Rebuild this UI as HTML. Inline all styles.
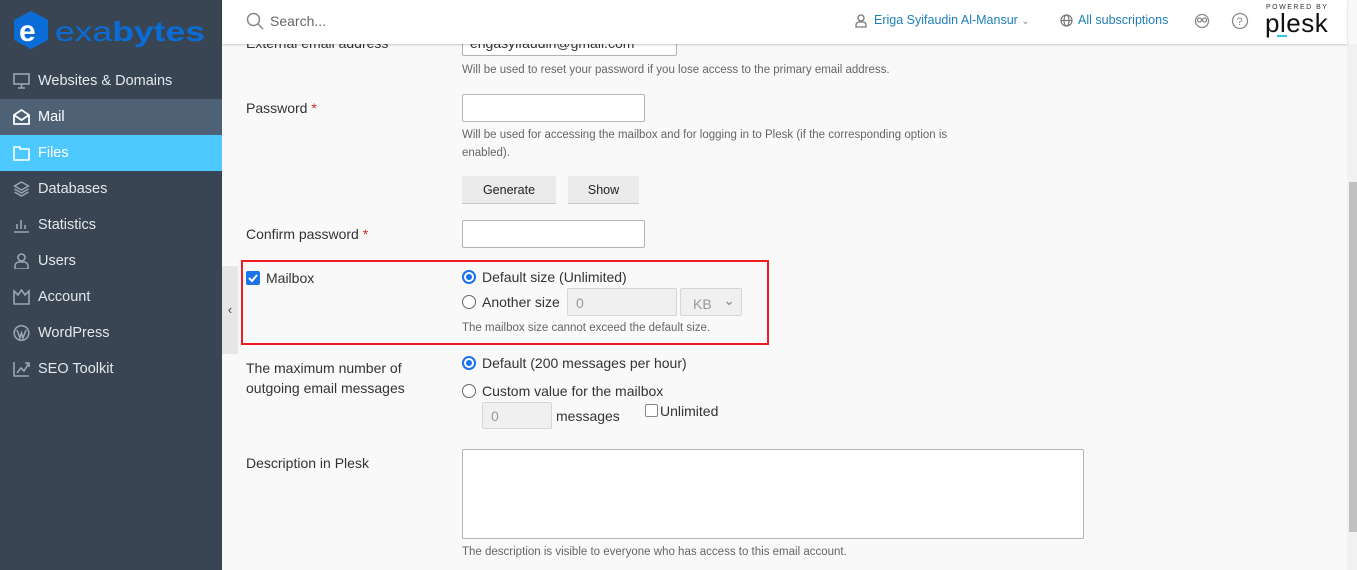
<!DOCTYPE html>
<html><head><meta charset="utf-8"><style>
*{box-sizing:border-box;margin:0;padding:0}
body{width:1357px;height:570px;overflow:hidden;font-family:"Liberation Sans",sans-serif;background:#f9f9f9;position:relative;color:#222}
.sb{position:absolute;left:0;top:0;width:222px;height:570px;background:#394552}
.logo{position:absolute;left:13px;top:10px}
.nav{position:absolute;top:63px;left:0;width:222px}
.nav div{height:36px;line-height:36px;color:#e4e8ec;font-size:14.5px;padding-left:38px;position:relative}
.nav div svg{position:absolute;left:13px;top:10px}
.nav .mail{background:#4f6174;color:#fff}
.nav .files{background:#4dc9ff;color:#fff}
.hd{position:absolute;left:222px;top:0;width:1125px;height:44px;background:#fff;box-shadow:0 1px 2px rgba(0,0,0,.2);z-index:5}
.main{position:absolute;left:0;top:44px;width:1347px;height:526px;overflow:hidden}
.main>*{margin-top:-44px}
.lbl{position:absolute;left:246px;font-size:14px;color:#333}
.req{color:#d02c2c}
.hint{position:absolute;left:462px;font-size:11.5px;color:#666;line-height:18px}
.inp{position:absolute;left:462px;width:183px;height:28px;border:1px solid #b3b3b3;background:#fff;border-radius:2px}
.btn{position:absolute;top:176px;height:28px;background:#ebebeb;border-bottom:1px solid #c8c8c8;font-size:12.5px;text-align:center;line-height:28px;color:#222}
.t{position:absolute;font-size:14px;color:#333}
.radio{position:absolute;width:14px;height:14px;border-radius:50%;border:1px solid #666;background:#fff}
.radio.on{border:2px solid #1a73e8}
.radio.on::after{content:"";position:absolute;left:2px;top:2px;width:6px;height:6px;border-radius:50%;background:#1a73e8}
.dis{position:absolute;background:#f0f0f0;border:1px solid #d6d6d6;color:#999;font-size:14px;border-radius:2px}
</style></head><body>
<div class="sb">
 <svg class="logo" width="195" height="40" viewBox="0 0 195 40"><polygon points="18,1 35,10 35,30 18,39 1,30 1,10" fill="#0a6dd7"/><text x="6" y="31" font-family="Liberation Sans" font-size="30" font-weight="bold" fill="#fff">e</text><text x="42" y="31" font-family="Liberation Sans" font-size="28" fill="#0a6dd7" textLength="150" lengthAdjust="spacingAndGlyphs">exa<tspan font-weight="bold">bytes</tspan></text></svg>
 <div class="nav">
  <div><svg width="17" height="16" fill="none" stroke="#9aa5b1" stroke-width="1.6"><rect x="1" y="1" width="15" height="10"/><path d="M5 15h7M8.5 11v4"/></svg>Websites &amp; Domains</div>
  <div class="mail"><svg width="17" height="16" fill="none" stroke="#fff" stroke-width="1.8"><path d="M1 6l7.5-5 7.5 5v9H1z M1 6l7.5 5 7.5-5"/></svg>Mail</div>
  <div class="files"><svg width="17" height="16" fill="none" stroke="#fff" stroke-width="1.6"><path d="M1 2h6v2h9v11H1z"/></svg>Files</div>
  <div><svg width="17" height="16" fill="none" stroke="#9aa5b1" stroke-width="1.5"><path d="M8.5 1l7 4-7 4-7-4z M1.5 8l7 4 7-4 M1.5 11l7 4 7-4"/></svg>Databases</div>
  <div><svg width="17" height="16" fill="none" stroke="#9aa5b1" stroke-width="1.6"><path d="M1 15h15M4 12V7M8 12V3M12 12V8"/></svg>Statistics</div>
  <div><svg width="17" height="16" fill="none" stroke="#9aa5b1" stroke-width="1.6"><circle cx="8.5" cy="4.5" r="3.5"/><path d="M2 16v-3a4 4 0 014-4h5a4 4 0 014 4v3z"/></svg>Users</div>
  <div><svg width="17" height="16" fill="none" stroke="#9aa5b1" stroke-width="1.6"><path d="M1 2l4 4 3.5-5 3.5 5 4-4v13H1z"/></svg>Account</div>
  <div><svg width="17" height="16" fill="none" stroke="#9aa5b1" stroke-width="1.6"><circle cx="8.5" cy="8" r="7.3"/><path d="M4 5l3 8 1.5-5 1.5 5 3-8"/></svg>WordPress</div>
  <div><svg width="17" height="16" fill="none" stroke="#9aa5b1" stroke-width="1.6"><path d="M1 1v14h15M4 12l4-5 3 3 5-8M12 2h4v4"/></svg>SEO Toolkit</div>
 </div>
</div>
<div class="hd">
 <svg style="position:absolute;left:24px;top:12px" width="18" height="18" fill="none" stroke="#888" stroke-width="1.5"><circle cx="7.5" cy="7.5" r="6"/><path d="M12 12l5 5"/></svg>
 <span style="position:absolute;left:48px;top:13px;font-size:14px;color:#666">Search...</span>
 <svg style="position:absolute;left:633px;top:14px" width="12" height="14" fill="none" stroke="#777" stroke-width="1.3"><circle cx="6" cy="4" r="3"/><path d="M1 13v-2a3 3 0 013-3h4a3 3 0 013 3v2z"/></svg>
 <span style="position:absolute;left:652px;top:13px;font-size:12.5px;color:#1e7fb8">Eriga Syifaudin Al-Mansur <span style="color:#888;font-size:10px">⌄</span></span>
 <svg style="position:absolute;left:838px;top:14px" width="13" height="13" fill="none" stroke="#777" stroke-width="1.2"><circle cx="6.5" cy="6.5" r="5.5"/><ellipse cx="6.5" cy="6.5" rx="2.5" ry="5.5"/><path d="M1 6.5h11"/></svg>
 <span style="position:absolute;left:856px;top:13px;font-size:12.5px;color:#1e7fb8">All subscriptions</span>
 <svg style="position:absolute;left:972px;top:13px" width="16" height="16" fill="none" stroke="#888" stroke-width="1.3"><circle cx="8" cy="8" r="6.5"/><circle cx="5.5" cy="7" r="2"/><circle cx="10.5" cy="7" r="2"/></svg>
 <svg style="position:absolute;left:1009px;top:12px" width="18" height="18" fill="none" stroke="#888" stroke-width="1.3"><circle cx="9" cy="9" r="7.5"/><text x="5.5" y="13" font-size="11" fill="#888" stroke="none" font-family="Liberation Sans">?</text></svg>
 <span style="position:absolute;left:1044px;top:4px;font-size:7px;letter-spacing:1.5px;color:#333">POWERED BY</span>
 <span style="position:absolute;left:1043px;top:8px;font-size:26px;color:#111;letter-spacing:.5px">plesk</span>
 <div style="position:absolute;left:1055px;top:35px;width:10px;height:2px;background:#33c2e8"></div>
</div>
<div style="position:absolute;left:1347px;top:44px;width:10px;height:526px;background:#f1f1f1"></div>
<div style="position:absolute;left:1349px;top:182px;width:8px;height:350px;background:#c1c1c1"></div>
<div style="position:absolute;left:222px;top:266px;width:16px;height:88px;background:#e6e6e6;font-size:13px;color:#444;line-height:88px;text-align:center">‹</div>

<div class="main">
<span class="lbl" style="top:35px">External email address</span>
<div class="inp" style="top:28px;width:215px"></div>
<span style="position:absolute;left:470px;top:35px;font-size:14px;color:#333">erigasyifaudin@gmail.com</span>
<div class="hint" style="top:61px">Will be used to reset your password if you lose access to the primary email address.</div>
<span class="lbl" style="top:100px">Password <span class="req">*</span></span>
<div class="inp" style="top:94px"></div>
<div class="hint" style="top:126px;width:490px">Will be used for accessing the mailbox and for logging in to Plesk (if the corresponding option is enabled).</div>
<div class="btn" style="left:462px;width:94px">Generate</div>
<div class="btn" style="left:568px;width:71px">Show</div>
<span class="lbl" style="top:226px">Confirm password <span class="req">*</span></span>
<div class="inp" style="top:220px"></div>

<div style="position:absolute;left:241px;top:260px;width:528px;height:85px;border:2px solid #ee1c25"></div>
<div style="position:absolute;left:246px;top:271px;width:14px;height:14px;background:#1a73e8;border-radius:2px"><svg width="14" height="14"><path d="M3 7l3 3 5-6" stroke="#fff" stroke-width="2" fill="none"/></svg></div>
<span class="t" style="left:266px;top:270px">Mailbox</span>
<div class="radio on" style="left:462px;top:270px"></div>
<span class="t" style="left:482px;top:269px">Default size (Unlimited)</span>
<div class="radio" style="left:462px;top:295px"></div>
<span class="t" style="left:482px;top:294px">Another size</span>
<div class="dis" style="left:567px;top:288px;width:110px;height:28px;padding:6px 8px">0</div>
<div class="dis" style="left:680px;top:288px;width:62px;height:28px;padding:7px 12px">KB <span style="position:absolute;right:6px;top:3px;color:#888">⌄</span></div>
<div class="hint" style="top:319px">The mailbox size cannot exceed the default size.</div>

<span class="lbl" style="top:358px;line-height:20px">The maximum number of<br>outgoing email messages</span>
<div class="radio on" style="left:462px;top:356px"></div>
<span class="t" style="left:482px;top:355px">Default (200 messages per hour)</span>
<div class="radio" style="left:462px;top:384px"></div>
<span class="t" style="left:482px;top:383px">Custom value for the mailbox</span>
<div class="dis" style="left:482px;top:402px;width:70px;height:27px;padding:5px 8px">0</div>
<span class="t" style="left:556px;top:408px">messages</span>
<div style="position:absolute;left:645px;top:404px;width:13px;height:13px;border:1px solid #888;background:#fff;border-radius:2px"></div>
<span class="t" style="left:660px;top:403px">Unlimited</span>

<span class="lbl" style="top:455px">Description in Plesk</span>
<div class="inp" style="top:449px;width:622px;height:90px"></div>
<div class="hint" style="top:543px">The description is visible to everyone who has access to this email account.</div>
</div>
</body></html>
